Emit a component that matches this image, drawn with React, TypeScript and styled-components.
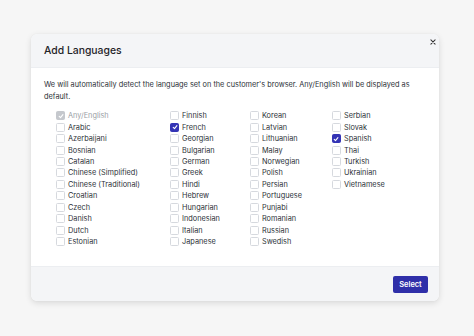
import React from 'react';
import styled, { createGlobalStyle } from 'styled-components';

const GlobalStyle = createGlobalStyle`
    html, body {
        margin: 0;
        padding: 0;
        background: #f6f6f6;
        font-family: Inter, "Liberation Sans", sans-serif;
    }
`;

const columns: string[][] = [
    ['Any/English', 'Arabic', 'Azerbaijani', 'Bosnian', 'Catalan', 'Chinese (Simplified)', 'Chinese (Traditional)', 'Croatian', 'Czech', 'Danish', 'Dutch', 'Estonian'],
    ['Finnish', 'French', 'Georgian', 'Bulgarian', 'German', 'Greek', 'Hindi', 'Hebrew', 'Hungarian', 'Indonesian', 'Italian', 'Japanese'],
    ['Korean', 'Latvian', 'Lithuanian', 'Malay', 'Norwegian', 'Polish', 'Persian', 'Portuguese', 'Punjabi', 'Romanian', 'Russian', 'Swedish'],
    ['Serbian', 'Slovak', 'Spanish', 'Thai', 'Turkish', 'Ukrainian', 'Vietnamese'],
];

const checked = ['French', 'Spanish'];

const App: React.FC = () => {
    return (
        <Page>
            <GlobalStyle />
            <Modal>
                <Header>
                    <Title>Add Languages</Title>
                    <Close aria-label="Close">
                        <svg width="6" height="6" viewBox="0 0 10 10">
                            <path d="M1.5 1.5 L8.5 8.5 M8.5 1.5 L1.5 8.5" stroke="#333" strokeWidth="1.7" strokeLinecap="round" />
                        </svg>
                    </Close>
                </Header>
                <Body>
                    <Description>
                        We will automatically detect the language set on the customer's browser. Any/English will be displayed as default.
                    </Description>
                    <Grid>
                        {columns.map((col, ci) => (
                            <Column key={ci}>
                                {col.map((lang) => {
                                    const disabled = lang === 'Any/English';
                                    const isOn = checked.includes(lang);
                                    return (
                                        <Option key={lang} disabled={disabled}>
                                            <Box checked={isOn} disabled={disabled}>
                                                {(isOn || disabled) && (
                                                    <svg width="6" height="6" viewBox="0 0 10 10">
                                                        <path d="M2 5.5 L4.2 7.6 L8.2 2.6" fill="none" stroke="#fff" strokeWidth="1.8" strokeLinecap="round" strokeLinejoin="round" />
                                                    </svg>
                                                )}
                                            </Box>
                                            {lang}
                                        </Option>
                                    );
                                })}
                            </Column>
                        ))}
                    </Grid>
                </Body>
                <Footer>
                    <SelectButton>Select</SelectButton>
                </Footer>
            </Modal>
        </Page>
    );
};

export default App;

const Page = styled.div`
    min-height: 336px;
    padding: 34px 0 0 31px;
    box-sizing: border-box;
`;

const Modal = styled.div`
    position: relative;
    width: 408px;
    background: #fff;
    border-radius: 6px;
    overflow: hidden;
    box-shadow: 0 2px 6px rgba(0, 0, 0, 0.12), 0 0 1px rgba(0, 0, 0, 0.1);
`;

const Header = styled.div`
    height: 34px;
    display: flex;
    align-items: center;
    padding: 0 13px;
    background: #f4f5f7;
    border-bottom: 1px solid #eceef1;
    box-sizing: border-box;
`;

const Title = styled.h2`
    margin: 0;
    font-size: 10.4px;
    font-weight: 500;
    color: #1f2328;
`;

const Close = styled.button`
    position: absolute;
    top: 3px;
    right: 2px;
    width: 9px;
    height: 9px;
    padding: 0;
    border: none;
    background: none;
    display: flex;
    align-items: center;
    justify-content: center;
`;

const Body = styled.div`
    padding: 11px 13px 19px;
`;

const Description = styled.p`
    margin: 0;
    font-size: 7.35px;
    line-height: 12px;
    color: #2b2f36;
`;

const Grid = styled.div`
    display: flex;
    gap: 30px;
    margin-top: 7px;
    padding-left: 12px;
`;

const Column = styled.div`
    display: flex;
    flex-direction: column;
`;

const Option = styled.label<{ disabled?: boolean }>`
    display: flex;
    align-items: center;
    gap: 3px;
    height: 11.46px;
    font-size: 7.35px;
    color: ${({ disabled }) => (disabled ? '#9a9ea5' : '#2b2f36')};
    white-space: nowrap;
`;

const Box = styled.span<{ checked?: boolean; disabled?: boolean }>`
    width: 7px;
    height: 7px;
    border-radius: 1.5px;
    display: flex;
    align-items: center;
    justify-content: center;
    border: 0.8px solid ${({ checked, disabled }) => (checked ? '#3434b5' : disabled ? '#c5c8cd' : '#d6d9de')};
    background: ${({ checked, disabled }) => (checked ? '#3434b5' : disabled ? '#c5c8cd' : '#fff')};
`;

const Footer = styled.div`
    height: 35px;
    display: flex;
    align-items: center;
    justify-content: flex-end;
    padding: 0 11px;
    background: #f4f5f7;
    border-top: 1px solid #eceef1;
    box-sizing: border-box;
`;

const SelectButton = styled.button`
    width: 35px;
    height: 17px;
    padding: 0;
    border: none;
    border-radius: 2px;
    background: #2f2fa9;
    color: #fff;
    font-family: Inter, "Liberation Sans", sans-serif;
    font-size: 7.4px;
    font-weight: 600;
`;
